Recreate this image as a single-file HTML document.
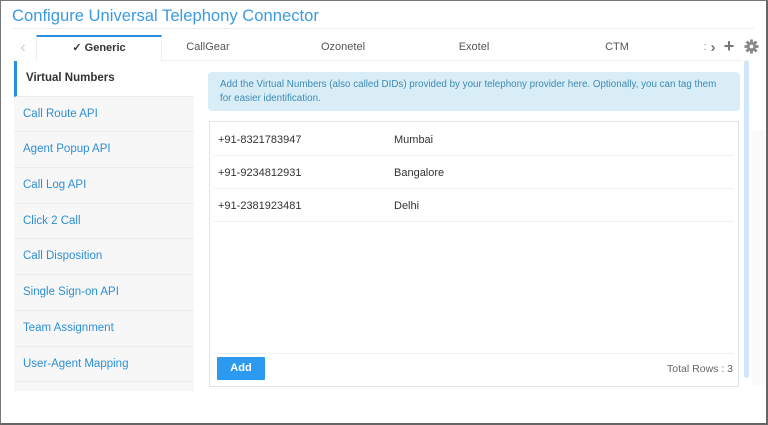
<!DOCTYPE html>
<html><head><meta charset="utf-8"><style>
*{box-sizing:border-box;margin:0;padding:0}
body{width:768px;height:425px;overflow:hidden;background:#fff;font-family:"Liberation Sans",sans-serif;position:relative}
.frame{position:absolute;left:0;top:0;width:768px;height:425px;border:1px solid #777;border-right:2px solid #666;border-bottom:2px solid #666}
.title{position:absolute;left:12px;top:6px;font-size:16.6px;color:#3a9be3}
.hline{position:absolute;left:12px;top:28px;width:742px;height:1px;background:#eee}
.tabs{position:absolute;left:0;top:35px;width:768px;height:26px;font-size:11px;color:#555}
.tab{position:absolute;top:0;height:26px;line-height:25px;text-align:center}
.gen{left:36px;width:126px;border-top:2px solid #2b8fe0;border-left:1px solid #eee;border-right:1px solid #eee;background:#fff;color:#333;font-weight:bold;line-height:23px}
.tabline{position:absolute;left:162px;top:60px;width:580px;height:1px;background:#eee}
.side{position:absolute;left:14px;top:61px;width:180px;height:330px;background:#f7f7f7}
.item{height:35.7px;line-height:34px;border-bottom:1px solid #ececec;padding-left:9px;font-size:11.5px;color:#2d8fd5}
.item.act{background:#fff;color:#333;font-weight:bold;border-left:3px solid #2b8fe0;padding-left:9px}
.info{position:absolute;left:208px;top:72px;width:532px;height:39px;background:#d9edf7;border-radius:4px;color:#3d8ab5;font-size:9.8px;line-height:14px;padding:6px 12px}
.tbl{position:absolute;left:209px;top:121px;width:530px;height:266px;border:1px solid #e3e3e3}
.row{position:absolute;left:4px;width:520px;height:33px;border-bottom:1px solid #f0f0f0;font-size:11px;color:#333;line-height:34px}
.row span{position:absolute}
.foot{position:absolute;left:4px;top:231px;width:520px;height:1px;background:#f0f0f0}
.add{position:absolute;left:7px;top:235px;width:48px;height:23px;background:#2d9af2;color:#fff;font-size:11px;font-weight:bold;text-align:center;line-height:23px;border-radius:1px}
.tot{position:absolute;right:5px;top:241px;font-size:10.5px;color:#666}
.scroll{position:absolute;left:744px;top:60px;width:5px;height:318px;background:#cfe6fb;border-radius:3px}
.rgray{position:absolute;left:752px;top:130px;width:13px;height:255px;background:#fafafa}
</style></head><body>
<div class="frame"></div>
<div class="title">Configure Universal Telephony Connector</div>
<div class="hline"></div>
<div class="tabs">
<div class="tab" style="left:16px;width:14px;color:#ccc;font-size:16px">‹</div>
<div class="tab gen">✓ Generic</div>
<div class="tab" style="left:148px;width:120px">CallGear</div>
<div class="tab" style="left:283px;width:120px">Ozonetel</div>
<div class="tab" style="left:414px;width:120px">Exotel</div>
<div class="tab" style="left:557px;width:120px">CTM</div>
<div class="tab" style="left:702px;width:6px;color:#888">:</div>
<div class="tab" style="left:707px;width:12px;color:#777;font-size:15px;font-weight:bold">›</div>
<div class="tab" style="left:721px;width:16px;color:#777;font-size:18px;font-weight:bold;line-height:23px">+</div>
<svg style="position:absolute;left:744px;top:4px" width="15" height="15" viewBox="0 0 16 16"><g fill="#888"><circle cx="8" cy="8" r="5"/><rect x="6.5" y="0.5" width="3" height="15"/><rect x="0.5" y="6.5" width="15" height="3"/><rect x="6.5" y="0.5" width="3" height="15" transform="rotate(45 8 8)"/><rect x="6.5" y="0.5" width="3" height="15" transform="rotate(-45 8 8)"/></g><circle cx="8" cy="8" r="2" fill="#fff"/></svg>
</div>
<div class="tabline"></div>
<div class="side">
<div class="item act">Virtual Numbers</div>
<div class="item">Call Route API</div>
<div class="item">Agent Popup API</div>
<div class="item">Call Log API</div>
<div class="item">Click 2 Call</div>
<div class="item">Call Disposition</div>
<div class="item">Single Sign-on API</div>
<div class="item">Team Assignment</div>
<div class="item">User-Agent Mapping</div>
</div>
<div class="info">Add the Virtual Numbers (also called DIDs) provided by your telephony provider here. Optionally, you can tag them for easier identification.</div>
<div class="tbl">
<div class="row" style="top:1px"><span style="left:4px">+91-8321783947</span><span style="left:180px">Mumbai</span></div>
<div class="row" style="top:34px"><span style="left:4px">+91-9234812931</span><span style="left:180px">Bangalore</span></div>
<div class="row" style="top:67px"><span style="left:4px">+91-2381923481</span><span style="left:180px">Delhi</span></div>
<div class="foot"></div>
<div class="add">Add</div>
<div class="tot">Total Rows : 3</div>
</div>
<div class="scroll"></div>
<div class="rgray"></div>
</body></html>
